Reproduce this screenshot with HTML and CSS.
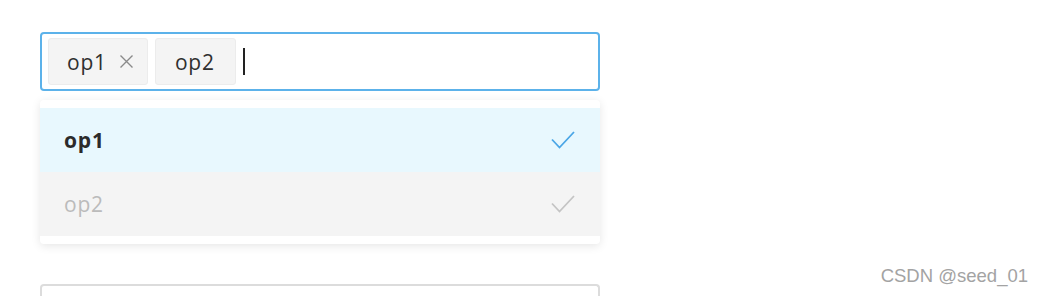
FILE: index.html
```html
<!DOCTYPE html>
<html>
<head>
<meta charset="utf-8">
<link rel="stylesheet" href="styles.css">
</head>
<body>
<div class="page">
  <div class="select">
    <span class="tag">op1<span class="tag-close"><svg width="15" height="15" viewBox="0 0 15 15"><path d="M1.5 1.5 L13.5 13.5 M13.5 1.5 L1.5 13.5" stroke="#8a8a8a" stroke-width="1.4" fill="none"/></svg></span></span>
    <span class="tag">op2</span>
    <span class="cursor"></span>
  </div>
  <div class="dropdown">
    <div class="option active"><span>op1</span><svg class="check" width="24" height="18" viewBox="0 0 24 18"><path d="M1 8.5 L8.5 16.5 L23 1" stroke="#4aa6e6" stroke-width="1.8" fill="none"/></svg></div>
    <div class="option disabled"><span>op2</span><svg class="check" width="24" height="18" viewBox="0 0 24 18"><path d="M1 8.5 L8.5 16.5 L23 1" stroke="#c4c4c4" stroke-width="1.8" fill="none"/></svg></div>
  </div>
  <div class="select2"></div>
</div>
<div class="watermark">CSDN @seed_01</div>
</body>
</html>
```

FILE: styles.css
```css
html, body {
  margin: 0;
  padding: 0;
  background: #fff;
  overflow: hidden;
}
body {
  width: 1044px;
  height: 296px;
  font-family: "Open Sans", "Noto Sans", sans-serif;
  color: #333;
  position: relative;
}
.page {
  padding: 32px 0 0 40px;
  width: 560px;
}
.select {
  box-sizing: border-box;
  height: 59px;
  border: 2px solid #5cb2ea;
  border-radius: 4px;
  display: flex;
  align-items: center;
  padding: 0 6px;
  gap: 7px;
}
.tag {
  box-sizing: border-box;
  height: 47px;
  display: flex;
  align-items: center;
  padding: 0 20px 0 19px;
  background: #f4f4f4;
  border: 1px solid #ececec;
  border-radius: 3px;
  font-size: 21px;
  letter-spacing: 0.8px;
  color: #2f2f2f;
}
.tag:first-child {
  padding: 0 13px 0 18px;
}
.tag-close {
  display: flex;
  margin-left: 12px;
}
.cursor {
  width: 2px;
  height: 27px;
  background: #222;
}
.dropdown {
  margin-top: 9px;
  background: #fff;
  border-radius: 4px;
  box-shadow: 0 2px 10px rgba(0,0,0,0.10);
  padding: 8px 0;
}
.option {
  height: 64px;
  display: flex;
  align-items: center;
  justify-content: space-between;
  padding: 0 25px 0 24px;
  font-size: 21px;
  letter-spacing: 0.8px;
}
.option.active {
  background: #e8f8fe;
  font-weight: 700;
  color: #2b2b2b;
}
.option.disabled {
  background: #f4f4f4;
  color: #bbbbbb;
}
.select2 {
  margin-top: 40px;
  height: 10px;
  border: 2px solid #dcdcdc;
  border-bottom: none;
  border-radius: 4px 4px 0 0;
}
.watermark {
  position: absolute;
  right: 16px;
  top: 265px;
  font-family: "Liberation Sans", Arial, sans-serif;
  font-size: 18.5px;
  color: #a3a3a3;
}
```
